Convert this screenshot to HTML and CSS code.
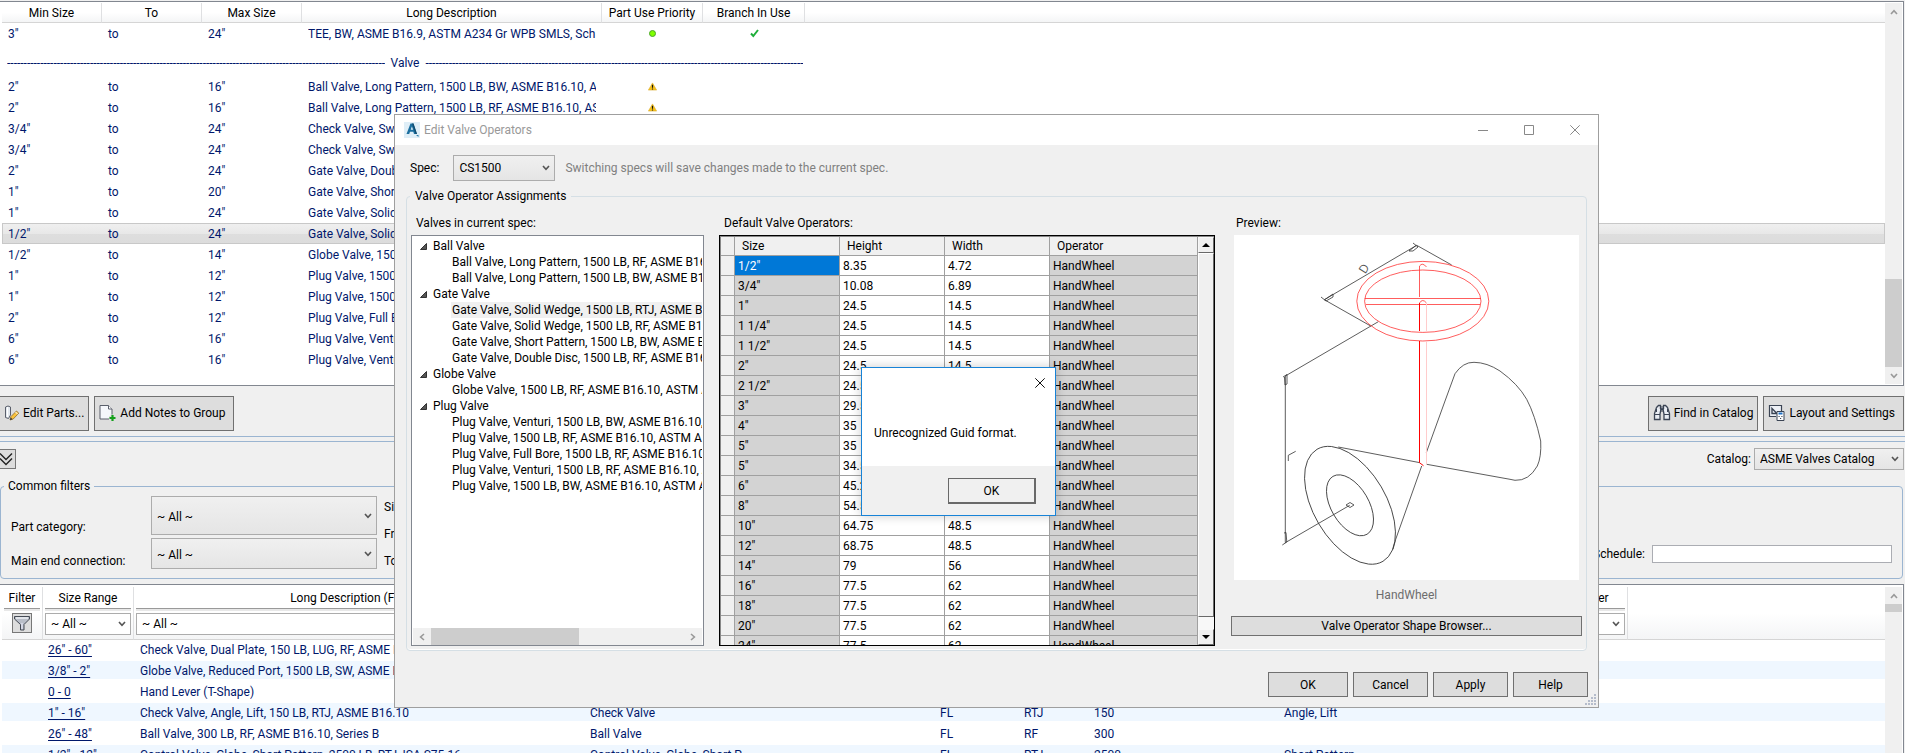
FILE: index.html
```html
<!DOCTYPE html>
<html lang="en">
<head>
<meta charset="utf-8">
<title>Spec Editor</title>
<link rel="stylesheet" href="styles.css">
</head>
<body>
<svg class="defs" aria-hidden="true">
  <symbol id="down" viewBox="0 0 8 6"><path d="M1 1l3 3.4L7 1" fill="none" stroke="currentColor" stroke-width="1.6"/></symbol>
  <symbol id="up" viewBox="0 0 8 6"><path d="M1 5l3-3.4L7 5" fill="none" stroke="currentColor" stroke-width="1.6"/></symbol>
  <symbol id="left" viewBox="0 0 6 8"><path d="M5 1L1.6 4 5 7" fill="none" stroke="currentColor" stroke-width="1.6"/></symbol>
  <symbol id="right" viewBox="0 0 6 8"><path d="M1 1l3.4 3L1 7" fill="none" stroke="currentColor" stroke-width="1.6"/></symbol>
  <symbol id="warn" viewBox="0 0 10 9"><path d="M5 .5L9.6 8.5H.4z" fill="#f6c21c" stroke="#d9a92b" stroke-width=".6"/><path d="M5 2.5v3.4M5 6.7v1.2" stroke="#111" stroke-width="1.3"/></symbol>
  <symbol id="open" viewBox="0 0 7 7"><path d="M6.5.5v6h-6z" fill="#555" stroke="#333"/></symbol>
</svg>

<main class="app">
  <section class="list top-list">
    <div class="list-body">
      <table class="grid parts">
        <colgroup><col class="c100"><col class="c100"><col class="c100"><col class="c300"><col class="c101"><col class="c102"><col></colgroup>
        <thead><tr><th>Min Size</th><th>To</th><th>Max Size</th><th>Long Description</th><th>Part Use Priority</th><th>Branch In Use</th><th></th></tr></thead>
        <tbody>
          <tr><td>3"</td><td>to</td><td>24"</td><td><div class="clip">TEE, BW, ASME B16.9, ASTM A234 Gr WPB SMLS, Sch 80</div></td><td class="mark"><svg class="i9" viewBox="0 0 9 9"><circle cx="4.500" cy="4.500" r="3" fill="#7fff00" stroke="#4aa52a"/></svg></td><td class="mark"><svg class="i9" viewBox="0 0 9 9"><path d="M1 4.500l2.300 2.500L8 1" fill="none" stroke="#1fae3a" stroke-width="2"/></svg></td><td></td></tr>
          <tr class="group"><td colspan="6"><div class="divider"><span class="dash">----------------------------------------------------------------------------------------------------------------------</span><span>Valve</span><span class="dash">----------------------------------------------------------------------------------------------------------------------</span></div></td><td></td></tr>
          <tr><td>2"</td><td>to</td><td>16"</td><td><div class="clip">Ball Valve, Long Pattern, 1500 LB, BW, ASME B16.10, ASTM</div></td><td class="mark"><svg class="i9"><use href="#warn"/></svg></td><td></td><td></td></tr>
          <tr><td>2"</td><td>to</td><td>16"</td><td><div class="clip">Ball Valve, Long Pattern, 1500 LB, RF, ASME B16.10, ASTM</div></td><td class="mark"><svg class="i9"><use href="#warn"/></svg></td><td></td><td></td></tr>
          <tr><td>3/4"</td><td>to</td><td>24"</td><td><div class="clip">Check Valve, Swing</div></td><td></td><td></td><td></td></tr>
          <tr><td>3/4"</td><td>to</td><td>24"</td><td><div class="clip">Check Valve, Swing</div></td><td></td><td></td><td></td></tr>
          <tr><td>2"</td><td>to</td><td>24"</td><td><div class="clip">Gate Valve, Double Disc</div></td><td></td><td></td><td></td></tr>
          <tr><td>1"</td><td>to</td><td>20"</td><td><div class="clip">Gate Valve, Short Pattern</div></td><td></td><td></td><td></td></tr>
          <tr><td>1"</td><td>to</td><td>24"</td><td><div class="clip">Gate Valve, Solid Wedge</div></td><td></td><td></td><td></td></tr>
          <tr class="selected"><td>1/2"</td><td>to</td><td>24"</td><td><div class="clip">Gate Valve, Solid Wedge</div></td><td></td><td></td><td></td></tr>
          <tr><td>1/2"</td><td>to</td><td>14"</td><td><div class="clip">Globe Valve, 1500 LB</div></td><td></td><td></td><td></td></tr>
          <tr><td>1"</td><td>to</td><td>12"</td><td><div class="clip">Plug Valve, 1500 LB</div></td><td></td><td></td><td></td></tr>
          <tr><td>1"</td><td>to</td><td>12"</td><td><div class="clip">Plug Valve, 1500 LB</div></td><td></td><td></td><td></td></tr>
          <tr><td>2"</td><td>to</td><td>12"</td><td><div class="clip">Plug Valve, Full Bore</div></td><td></td><td></td><td></td></tr>
          <tr><td>6"</td><td>to</td><td>16"</td><td><div class="clip">Plug Valve, Venturi</div></td><td></td><td></td><td></td></tr>
          <tr><td>6"</td><td>to</td><td>16"</td><td><div class="clip">Plug Valve, Venturi</div></td><td></td><td></td><td></td></tr>
        </tbody>
      </table>
    </div>
    <div class="vbar"><svg class="chev"><use href="#up"/></svg><i class="grow"></i><i class="thumb long"></i><svg class="chev"><use href="#down"/></svg></div>
  </section>

  <div class="toolbar">
    <button class="btn tool first snug" type="button"><svg class="i16" viewBox="0 0 16 16"><path d="M1.500 2Q4 0 6.500 2v8l-2 3.500-3-1z" fill="#e3e8ee" stroke="#5a5f6b"/><path d="M3.500 2v10" stroke="#fff"/><path d="M6 15l1-3.500L12.500 6l2.300 2.200L9.200 14z" fill="#f9c13b" stroke="#8a6a2a" stroke-width=".8"/><path d="M6 15l.8-2.500 1.700 1.700z" fill="#333"/><path d="M11.500 7l2.200 2.200" stroke="#fff"/></svg>Edit Parts...</button>
    <button class="btn tool" type="button"><svg class="i18" viewBox="0 0 18 18"><path d="M1 1.500h8.500L13 5v10H1z" fill="#f5f7fb" stroke="#5a5f6b"/><path d="M9.500 1.500V5H13" fill="#fff" stroke="#5a5f6b"/><path d="M13.500 10.500v7M10 14h7" stroke="#ddd" stroke-width="4"/><path d="M13.500 11v6M10.500 14h6" stroke="#14a01c" stroke-width="2.200"/></svg>Add Notes to Group</button>
    <span class="grow"></span>
    <button class="btn tool snug" type="button"><svg class="i18" viewBox="0 0 18 18"><path d="M3.500 3.500L5.500 1.500H7.500V5M14.500 3.500L12.500 1.500H10.500V5M3.500 3.500L1.500 9.500V15.500H7V10L8 5h2l1 5v5.500h5.500v-6L14.500 3.500" fill="#e8ecf3" stroke="#3b4454" stroke-width="1.300"/><path d="M1.500 10.500H7M11 10.500h5.500M3.500 5v3M14.500 5v3M7.500 5.500h3M9 2v6" stroke="#3b4454"/></svg>Find in Catalog</button>
    <button class="btn tool" type="button"><svg class="i18" viewBox="0 0 18 18"><path d="M8 12.500H1.500v-11h12V7" fill="#eef1f6" stroke="#3b4454" stroke-width="1.200"/><path d="M4 4.500l5 5H4z" fill="none" stroke="#3b4454" stroke-width="1.400"/><path d="M9 7.500h7v9H9z" fill="#fff" stroke="#3b4454"/><path d="M10.500 9.500h4" stroke="#1d6fc4" stroke-width="2"/><path d="M10.500 12.500h1.200m1.600 0h1.200M12 14.500h1.200" stroke="#3b4454"/></svg>Layout and Settings</button>
  </div>

  <div class="panel">
    <div class="catalog-row">
      <button class="expand" type="button" aria-label="Collapse"><svg viewBox="0 0 16 18"><path d="M0 3.500l6 6 6-6M0 8.500l6 6 6-6" fill="none" stroke="#222" stroke-width="1.400"/></svg></button>
      <span class="grow"></span>
      <label for="catalog">Catalog:</label>
      <span class="combo catalog"><select id="catalog"><option>ASME Valves Catalog</option></select><svg class="chev"><use href="#down"/></svg></span>
    </div>
    <fieldset class="filters">
      <legend>Common filters</legend>
      <div class="filter-grid">
        <label class="f-label" for="cat">Part category:</label>
        <span class="combo"><select id="cat"><option>~ All ~</option></select><svg class="chev"><use href="#down"/></svg></span>
        <label class="f-label" for="conn">Main end connection:</label>
        <span class="combo"><select id="conn"><option>~ All ~</option></select><svg class="chev"><use href="#down"/></svg></span>
        <div class="sizes"><span>Size</span><span>From</span><span>To</span></div>
        <div class="schedule"><label for="sched">Schedule:</label><input id="sched" type="text"></div>
      </div>
    </fieldset>
  </div>

  <section class="list bottom-list">
    <div class="list-body">
      <table class="grid catalog-items">
        <colgroup><col class="k1"><col class="k2"><col class="k3"><col class="k4"><col class="k5"><col class="k6"><col class="k7"><col class="k8"><col class="k9"><col></colgroup>
        <thead><tr>
          <th><div class="cap">Filter</div><button class="funnel" type="button" aria-label="Filter"><svg class="i16" viewBox="0 0 16 16"><path d="M.5 1.500h15V4L10 9.500V15H6.500V9.500L.5 4z" fill="#b9bec8" stroke="#454b55"/><path d="M2 3h12" stroke="#f0f2f6" stroke-width="1.500"/><path d="M8 8v6" stroke="#eef"/></svg></button></th>
          <th><div class="cap">Size Range</div><span class="combo white"><select aria-label="Size Range"><option>~ All ~</option></select><svg class="chev"><use href="#down"/></svg></span></th>
          <th><div class="cap">Long Description (Family)</div><span class="combo white"><select aria-label="Long Description"><option>~ All ~</option></select><svg class="chev"><use href="#down"/></svg></span></th>
          <th></th><th></th><th></th><th></th><th></th>
          <th><div class="cap">Manufacturer</div><span class="combo white"><select aria-label="Manufacturer"><option>~ All ~</option></select><svg class="chev"><use href="#down"/></svg></span></th>
          <th></th>
        </tr></thead>
        <tbody>
          <tr><td></td><td><a href="#">26" - 60"</a></td><td>Check Valve, Dual Plate, 150 LB, LUG, RF, ASME B16.10</td><td></td><td></td><td></td><td></td><td></td><td></td><td></td></tr>
          <tr><td></td><td><a href="#">3/8" - 2"</a></td><td>Globe Valve, Reduced Port, 1500 LB, SW, ASME B16.10</td><td></td><td></td><td></td><td></td><td></td><td></td><td></td></tr>
          <tr><td></td><td><a href="#">0 - 0</a></td><td>Hand Lever (T-Shape)</td><td></td><td></td><td></td><td></td><td></td><td></td><td></td></tr>
          <tr><td></td><td><a href="#">1" - 16"</a></td><td>Check Valve, Angle, Lift, 150 LB, RTJ, ASME B16.10</td><td>Check Valve</td><td>FL</td><td>RTJ</td><td>150</td><td>Angle, Lift</td><td></td><td></td></tr>
          <tr><td></td><td><a href="#">26" - 48"</a></td><td>Ball Valve, 300 LB, RF, ASME B16.10, Series B</td><td>Ball Valve</td><td>FL</td><td>RF</td><td>300</td><td></td><td></td><td></td></tr>
          <tr><td></td><td><a href="#">1/2" - 12"</a></td><td>Control Valve, Globe, Short Pattern, 2500 LB, RTJ, ISA S75.16</td><td>Control Valve, Globe, Short P</td><td>FL</td><td>RTJ</td><td>2500</td><td>Short Pattern</td><td></td><td></td></tr>
        </tbody>
      </table>
    </div>
    <div class="vbar"><svg class="chev"><use href="#up"/></svg><i class="thumb short"></i></div>
  </section>
</main>

<section class="dialog" role="dialog" aria-label="Edit Valve Operators">
  <header class="title">
    <svg class="i16" viewBox="0 0 16 16"><path d="M0 0h16v16H0z" fill="#dfeef7"/><path d="M2.500 12L6.500 1.500h3L13 12h-3l-.7-2.200H6L5.200 12z" fill="#1c6f9f"/><path d="M7.900 4.500L6.700 7.800h2.400z" fill="#dfeef7"/><path d="M9.500 1.500L13 12h-1.500L8 1.500z" fill="#124c70"/><path d="M12 13h2.500v2z" fill="#2a7ba8"/></svg>
    <span class="grow">Edit Valve Operators</span>
    <button type="button" aria-label="Minimize"><svg viewBox="0 0 10 10"><path d="M0 5.500h10" stroke="#888"/></svg></button>
    <button type="button" aria-label="Maximize"><svg viewBox="0 0 10 10"><path d="M.5.5h9v9h-9z" fill="none" stroke="#888"/></svg></button>
    <button type="button" aria-label="Close"><svg viewBox="0 0 10 10"><path d="M.3.3l9.400 9.400M9.700.3L.3 9.700" stroke="#888"/></svg></button>
  </header>
  <div class="spec-row">
    <label for="spec">Spec:</label>
    <span class="combo spec"><select id="spec"><option>CS1500</option></select><svg class="chev"><use href="#down"/></svg></span>
    <span class="hint">Switching specs will save changes made to the current spec.</span>
  </div>
  <fieldset class="assign">
    <legend>Valve Operator Assignments</legend>
    <div class="columns">
      <div class="col tree-col">
        <h2>Valves in current spec:</h2>
        <div class="tree">
          <ul>
            <li><svg class="i7"><use href="#open"/></svg>Ball Valve</li>
            <li class="leaf"><span>Ball Valve, Long Pattern, 1500 LB, RF, ASME B16.10</span></li>
            <li class="leaf"><span>Ball Valve, Long Pattern, 1500 LB, BW, ASME B16.10</span></li>
            <li><svg class="i7"><use href="#open"/></svg>Gate Valve</li>
            <li class="leaf on"><span>Gate Valve, Solid Wedge, 1500 LB, RTJ, ASME B16.10</span></li>
            <li class="leaf"><span>Gate Valve, Solid Wedge, 1500 LB, RF, ASME B16.10</span></li>
            <li class="leaf"><span>Gate Valve, Short Pattern, 1500 LB, BW, ASME B16.10</span></li>
            <li class="leaf"><span>Gate Valve, Double Disc, 1500 LB, RF, ASME B16.10</span></li>
            <li><svg class="i7"><use href="#open"/></svg>Globe Valve</li>
            <li class="leaf"><span>Globe Valve, 1500 LB, RF, ASME B16.10, ASTM A216</span></li>
            <li><svg class="i7"><use href="#open"/></svg>Plug Valve</li>
            <li class="leaf"><span>Plug Valve, Venturi, 1500 LB, BW, ASME B16.10,</span></li>
            <li class="leaf"><span>Plug Valve, 1500 LB, RF, ASME B16.10, ASTM A216</span></li>
            <li class="leaf"><span>Plug Valve, Full Bore, 1500 LB, RF, ASME B16.10,</span></li>
            <li class="leaf"><span>Plug Valve, Venturi, 1500 LB, RF, ASME B16.10, ASTM</span></li>
            <li class="leaf"><span>Plug Valve, 1500 LB, BW, ASME B16.10, ASTM A216</span></li>
          </ul>
          <div class="hbar"><svg class="chev-h"><use href="#left"/></svg><i class="thumb wide"></i><i class="grow"></i><svg class="chev-h"><use href="#right"/></svg></div>
        </div>
      </div>
      <div class="col ops-col">
        <h2>Default Valve Operators:</h2>
        <div class="ops">
          <div class="ops-body">
            <table>
              <colgroup><col class="o0"><col class="o1"><col class="o1"><col class="o1"><col></colgroup>
              <thead><tr><th></th><th>Size</th><th>Height</th><th>Width</th><th>Operator</th></tr></thead>
              <tbody>
                <tr><th></th><td class="cur">1/2"</td><td>8.35</td><td>4.72</td><td>HandWheel</td></tr>
                <tr><th></th><td>3/4"</td><td>10.08</td><td>6.89</td><td>HandWheel</td></tr>
                <tr><th></th><td>1"</td><td>24.5</td><td>14.5</td><td>HandWheel</td></tr>
                <tr><th></th><td>1 1/4"</td><td>24.5</td><td>14.5</td><td>HandWheel</td></tr>
                <tr><th></th><td>1 1/2"</td><td>24.5</td><td>14.5</td><td>HandWheel</td></tr>
                <tr><th></th><td>2"</td><td>24.5</td><td>14.5</td><td>HandWheel</td></tr>
                <tr><th></th><td>2 1/2"</td><td>24.5</td><td></td><td>HandWheel</td></tr>
                <tr><th></th><td>3"</td><td>29.5</td><td></td><td>HandWheel</td></tr>
                <tr><th></th><td>4"</td><td>35</td><td></td><td>HandWheel</td></tr>
                <tr><th></th><td>5"</td><td>35</td><td></td><td>HandWheel</td></tr>
                <tr><th></th><td>5"</td><td>34.5</td><td></td><td>HandWheel</td></tr>
                <tr><th></th><td>6"</td><td>45.25</td><td></td><td>HandWheel</td></tr>
                <tr><th></th><td>8"</td><td>54.5</td><td></td><td>HandWheel</td></tr>
                <tr><th></th><td>10"</td><td>64.75</td><td>48.5</td><td>HandWheel</td></tr>
                <tr><th></th><td>12"</td><td>68.75</td><td>48.5</td><td>HandWheel</td></tr>
                <tr><th></th><td>14"</td><td>79</td><td>56</td><td>HandWheel</td></tr>
                <tr><th></th><td>16"</td><td>77.5</td><td>62</td><td>HandWheel</td></tr>
                <tr><th></th><td>18"</td><td>77.5</td><td>62</td><td>HandWheel</td></tr>
                <tr><th></th><td>20"</td><td>77.5</td><td>62</td><td>HandWheel</td></tr>
                <tr><th></th><td>24"</td><td>77.5</td><td>62</td><td>HandWheel</td></tr>
              </tbody>
            </table>
          </div>
          <div class="classic-bar">
            <button type="button" aria-label="Scroll up"><svg viewBox="0 0 8 4"><path d="M4 0l4 4H0z"/></svg></button>
            <i class="raised grow"></i><i class="track"></i>
            <button type="button" aria-label="Scroll down"><svg viewBox="0 0 8 4"><path d="M0 0h8L4 4z"/></svg></button>
          </div>
        </div>
      </div>
      <div class="col preview-col">
        <h2>Preview:</h2>
        <svg class="preview" viewBox="0 0 345 345" fill="none" stroke="#333" stroke-width=".8">
          <path d="M217.700 30L182.700 10.300 90.300 64.700l46.400 26.300M144.300 86.700L51.300 141V307.700l64.400-37.400"/>
          <path d="M179 8l5 4-5 4-4 0 7-5.500M87 62l5 4 7-4v-3l-8 5.500M49 142l4-2.500V149l-2 1-.5-8M50 298l2-.5.8 9.500-4.500 3M112 270l4-2.500 4 2.500-4 2.500z"/>
          <path d="M54.300 226v-5.700l7.400-4"/>
          <ellipse cx="116" cy="270.300" rx="65" ry="36.300" transform="rotate(59.500 116 270.300)"/>
          <ellipse cx="116" cy="270.300" rx="33.600" ry="18.800" transform="rotate(59.500 116 270.300)"/>
          <path d="M104.300 212L186 227.700M187.700 231L161.700 304.300 159 314.300"/>
          <path d="M192.300 217.700L211 166 221 138.700Q229 127 240 127.300 253 127.500 266 136 284 149 292.700 164.300 301 180 306.700 206 307.500 222 303.300 231 295 246 281 245.300L276 244.300 192.700 229.300"/>
          <g stroke="#f33">
            <ellipse cx="188.800" cy="66.200" rx="66" ry="39.800"/>
            <ellipse cx="188.800" cy="66.200" rx="58.200" ry="31.200"/>
            <path d="M130.700 63.500H247M132 69.500H246M185.500 62V31q3-4 7 1M185.500 68q3-5 7 0"/>
            <path d="M185.500 68v28M185.500 106v121.700l4 3" stroke="#f00" stroke-width="1"/>
            <path d="M192.500 68v28M192.500 106V229" stroke="#fcc" stroke-width="1"/>
          </g>
          <text x="126" y="38" transform="rotate(-58 130 34)">D</text>
        </svg>
        <p class="shape">HandWheel</p>
        <button class="btn browse" type="button">Valve Operator Shape Browser...</button>
      </div>
    </div>
  </fieldset>
  <footer class="actions">
    <button class="btn wide-btn" type="button">OK</button>
    <button class="btn" type="button">Cancel</button>
    <button class="btn" type="button">Apply</button>
    <button class="btn" type="button">Help</button>
  </footer>
  <svg class="grip" viewBox="0 0 12 12"><path d="M9 1h2M9 4h2M9 7h2M9 10h2M6 4h2M6 7h2M6 10h2M3 7h2M3 10h2M0 10h2" stroke="#b5bccb" stroke-width="2"/></svg>
</section>

<section class="message" role="alertdialog" aria-label="Error">
  <div class="message-body">
    <button class="x" type="button" aria-label="Close"><svg viewBox="0 0 10 10"><path d="M.3.3l9.400 9.400M9.700.3L.3 9.700" stroke="#111"/></svg></button>
    <p>Unrecognized Guid format.</p>
  </div>
  <div class="message-foot"><button class="ok" type="button">OK</button></div>
</section>
</body>
</html>
```

FILE: styles.css
```css
* { box-sizing: border-box; }
html, body { height: 100%; }
body {
  margin: 0;
  overflow: hidden;
  position: relative;
  background: #f0f0f0;
  color: #000;
  font: 12px/16px Roboto, "Open Sans", sans-serif;
}
button, select, input { font: inherit; color: inherit; margin: 0; }
h2, p, ul { margin: 0; padding: 0; font-weight: 400; font-size: inherit; }
fieldset { margin: 0; min-width: 0; }
svg { display: block; flex: none; }
.defs { position: absolute; width: 0; height: 0; }
.grow { flex: 1; }
.chev { width: 8px; height: 6px; color: #555; }
.chev-h { width: 6px; height: 8px; color: #999; margin: 0 6px; }
.i7 { width: 7px; height: 7px; }
.i9 { width: 9px; height: 9px; }
.i16 { width: 16px; height: 16px; }
.i18 { width: 18px; height: 18px; }

/* main window */
.app { height: 100%; display: flex; flex-direction: column; padding-top: 1px; }
.list { display: flex; background: #fff; border: 1px solid #828790; border-left: 0; margin-right: 1px; padding: 1px 1px 1px 2px; }
.list-body { flex: 1; min-width: 0; overflow: hidden; }
.top-list { height: 385px; flex: none; }
.bottom-list { flex: 1; min-height: 0; margin-top: 5px; border-bottom: 0; padding: 2px 1px 0 2px; }
.grid { width: 100%; border-collapse: separate; border-spacing: 0; table-layout: fixed; color: #00176b; }
.grid th { font-weight: 400; color: #000; border-right: 1px solid #dfe0e2; border-bottom: 1px solid #d5d5d5; background: linear-gradient(#fff 50%, #f4f5f6); padding: 0; }
.grid th:last-child { border-right: 0; }
.grid td { padding: 0 6px; white-space: nowrap; }
.parts th { height: 20px; }
.parts td { height: 21px; }
.parts .group td { height: 32px; padding: 5px 0 0 5px; }
.clip { overflow: hidden; }
.divider { display: flex; gap: 6px; padding-right: 2px; }
.dash { flex: 1; overflow: hidden; }
.mark svg { margin: 0 auto; }
.selected { outline: 1px solid #c8c8c8; outline-offset: -1px; background: linear-gradient(#f0f0f0 0, #e8e8e8 50%, #dedede 50%, #dcdcdc); }
.c100 { width: 100px; }
.c300 { width: 300px; }
.c101 { width: 101px; }
.c102 { width: 102px; }

.vbar { width: 17px; background: #f0f0f0; display: flex; flex-direction: column; align-items: center; }
.vbar .chev { margin: 6px 0 5px; color: #999; }
.thumb { background: #cdcdcd; }
.long { width: 17px; height: 88px; }
.short { width: 17px; height: 8px; }

.toolbar { display: flex; gap: 5px; padding: 10px 1px 4px 0; height: 51px; flex: none; border-bottom: 1px solid #9bb5d1; }
.btn { background: #ddd; border: 1px solid #707070; padding: 0; text-align: center; }
.tool { display: flex; align-items: center; gap: 3px; padding: 0 8px 2px 4px; height: 35px; white-space: nowrap; }
.tool.snug { padding-right: 4px; }
.first { border-left: 0; }

.panel { border-top: 1px solid #9bb5d1; margin-top: 4px; padding: 6px 1px 0 0; }
.catalog-row { display: flex; align-items: center; gap: 3px; height: 22px; }
.expand { width: 16px; height: 20px; border: 1px solid #777; border-left: 0; background: #ddd; padding: 0; }
.expand svg { width: 16px; height: 18px; }
.combo { display: grid; align-items: center; height: 100%; }
.combo > * { grid-area: 1 / 1; }
.combo select { appearance: none; width: 100%; height: 100%; border: 1px solid #acacac; border-radius: 0; background: linear-gradient(#f0f0f0, #e5e5e5); padding: 0 5px; }
.combo .chev { justify-self: end; margin-right: 5px; pointer-events: none; }
.white { height: 22px; text-align: left; }
.combo.white select { background: #fff; }
.catalog { width: 150px; }
.filters { border: 1px solid #9bb5d1; border-radius: 4px; padding: 2px 10px 9px; margin: 8px 1px 0 0; }
.filters legend { padding: 0 4px; margin-left: -7px; }
.filter-grid { display: grid; grid-template-columns: 140px 226px 1fr auto; grid-template-rows: 39px 31px; gap: 3px 0; }
.f-label { grid-column: 1; align-self: end; }
.filter-grid .combo { grid-column: 2; }
.filter-grid .combo select { padding-top: 2px; }
.sizes { grid-area: 1 / 3 / 3 / 4; display: flex; flex-direction: column; justify-content: space-between; padding: 3px 7px 0; }
.schedule { grid-area: 2 / 4; display: flex; gap: 7px; align-items: center; }
.schedule input { width: 240px; height: 18px; border: 1px solid #abadb3; background: #fff; padding: 0 4px; }

.catalog-items th { height: 53px; vertical-align: top; padding: 0 2px; }
.cap { line-height: 22px; border-bottom: 1px solid #999; margin-bottom: 4px; height: 22px; box-shadow: 0 2px #e8e8e8; }
.catalog-items td { height: 21px; padding-top: 1px; padding-bottom: 2px; line-height: 18px; overflow: hidden; }
.catalog-items tbody tr:nth-child(even) { background: linear-gradient(#eff7ff, #eff7ff) 0 0 / 100% 18px no-repeat; }
.catalog-items a { color: inherit; text-underline-offset: 2px; margin-left: -1px; }
.funnel { width: 20px; height: 20px; border: 1px solid #777; background: #ddd; padding: 1px; }
.k1 { width: 41px; }
.k2 { width: 91px; }
.k3 { width: 450px; }
.k4 { width: 350px; }
.k5 { width: 84px; }
.k6 { width: 70px; }
.k7 { width: 190px; }
.k8 { width: 240px; }
.k9 { width: 110px; }

/* Edit Valve Operators window */
.dialog { position: absolute; left: 394px; top: 114px; width: 1205px; background: #f0f0f0; border: 1px solid #9f9f9f; display: flex; flex-direction: column; }
.title { display: flex; align-items: center; height: 30px; padding: 0 18px 0 9px; gap: 4px; background: #fff; color: #999; }
.title button, .x { border: 0; background: none; padding: 0; width: 10px; height: 10px; }
.title button { margin-left: 32px; }
.spec-row { display: flex; height: 26px; margin: 10px 15px 0; align-items: center; }
.spec { width: 102px; margin: 0 10px 0 14px; }
.hint { color: #808080; }
.assign { margin: 7px 11px 0; border: 1px solid #d5dfe5; border-radius: 4px; padding: 11px 4px 4px; box-shadow: inset 0 -1px #fff; }
.assign legend { margin-left: -1px; padding: 0 5px; }
.columns { display: flex; gap: 15px; }
.col { display: flex; flex-direction: column; gap: 4px; min-width: 0; }
.col h2 { padding: 0 5px; }
.tree-col { width: 293px; }
.tree, .ops { height: 411px; border: 1px solid #828790; background: #fff; overflow: hidden; }
.tree { display: flex; flex-direction: column; padding: 2px 1px 0; }
.tree ul { list-style: none; flex: 1; overflow: hidden; }
.tree li { display: flex; align-items: center; gap: 6px; height: 16px; padding-left: 7px; white-space: nowrap; }
.tree .leaf { padding-left: 38px; }
.leaf span { flex: 1; overflow: hidden; padding-left: 1px; }
.on span { background: #f0f0f0; }
.hbar { display: flex; align-items: center; height: 17px; background: #f0f0f0; }
.wide { width: 148px; height: 17px; }
.ops-col { width: 496px; }
.ops { display: flex; border: 1px solid #000; box-shadow: inset 1px 1px #888; padding: 1px 0 0 1px; background: #f0f0f0; }
.ops-body { flex: 1; overflow: hidden; }
.ops table { width: 100%; border-collapse: separate; border-spacing: 0; table-layout: fixed; }
.ops th, .ops td { height: 20px; line-height: 16px; border-right: 1px solid #a0a0a0; border-bottom: 1px solid #a0a0a0; padding: 1px 3px 0; text-align: left; font-weight: 400; white-space: nowrap; }
.ops thead th { height: 19px; padding: 0 7px; }
.ops td { background: #fff; }
.ops td:nth-child(2), .ops td:last-child { background: #d3d3d3; }
.ops td.cur { background: #0078d7; color: #fff; }
.o0 { width: 14px; }
.o1 { width: 105px; }
.classic-bar { width: 16px; display: flex; flex-direction: column; }
.classic-bar button { height: 16px; padding: 0; border: 1px solid #f8f8f8; border-right-color: #696969; border-bottom-color: #696969; background: #f0f0f0; display: grid; place-items: center; }
.classic-bar svg { width: 8px; height: 4px; }
.raised { border: 1px solid #fff; border-right-color: #696969; border-bottom-color: #696969; }
.track { height: 12px; background: #f8f8f8; }
.preview-col { flex: 1; padding-left: 1px; }
.preview-col h2 { padding-left: 5px; }
.preview { width: 345px; height: 345px; margin-left: 3px; background: #fff; }
.preview text { font: 12px "Open Sans", sans-serif; fill: #555; stroke: none; }
.shape { color: #6d6d6d; text-align: center; padding-top: 3px; }
.browse { height: 20px; line-height: 18px; margin-top: 9px; }
.actions { display: flex; justify-content: flex-end; gap: 5px; padding: 21px 10px 10px; }
.actions .btn { width: 75px; height: 25px; }
.actions .wide-btn { width: 80px; }
.grip { position: absolute; right: 1px; bottom: 1px; width: 12px; height: 12px; }

/* error message window */
.message { position: absolute; left: 861px; top: 367px; width: 195px; border: 1px solid #1883d7; background: #f0f0f0; box-shadow: 0 0 10px #0003; }
.message-body { background: #fff; height: 98px; padding: 10px 10px 0 12px; }
.x { display: block; margin-left: auto; }
.message-body p { padding-top: 37px; }
.message-foot { padding: 12px 19px 11px; text-align: right; }
.ok { width: 88px; height: 26px; padding: 0; background: #f0f0f0; border: 1px solid #696969; border-right-width: 2px; border-bottom-width: 2px; vertical-align: top; }
```
